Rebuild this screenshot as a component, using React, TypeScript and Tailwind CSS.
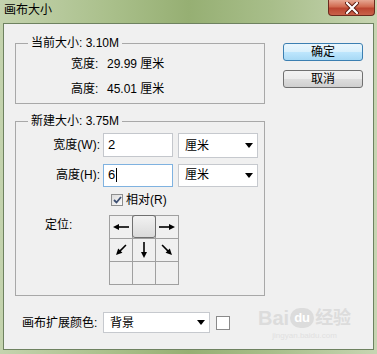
import React from 'react';

const Arrow = ({ angle, len = 14 }: { angle: number; len?: number }) => (
  <svg width="22" height="22" viewBox="0 0 22 22">
    <g transform={`rotate(${angle} 11 11)`}>
      <line x1={11 + len / 2} y1="11" x2={11 - len / 2 + 4} y2="11" stroke="#000" strokeWidth="1.6" />
      <polygon points={`${11 - len / 2},11 ${11 - len / 2 + 6},8 ${11 - len / 2 + 6},14`} fill="#000" />
    </g>
  </svg>
);

const Select = ({ value, w }: { value: string; w: string }) => (
  <div className={`${w} h-full bg-white border border-[#c6c9ce] flex items-center justify-between pl-[6px] pr-[4px]`}>
    <span className="text-[12px]">{value}</span>
    <svg width="8" height="5" viewBox="0 0 8 5">
      <polygon points="0,0 8,0 4,5" fill="#000" />
    </svg>
  </div>
);

const GroupBox = ({ title, className, children }: { title: string; className: string; children: React.ReactNode }) => (
  <div className={`relative w-[250px] border border-[#a8a8a8] ${className}`}>
    <span className="absolute -top-[8px] left-[12px] bg-[#f0f0f0] px-[3px] leading-[14px]">{title}</span>
    {children}
  </div>
);

export default function App() {
  return (
    <div className="w-[377px] h-[354px] relative overflow-hidden flex flex-col bg-[linear-gradient(90deg,#c4d3ae_0%,#a9bf8a_30%,#96af73_50%,#a8be8a_72%,#c7d5b2_100%)] font-['Liberation_Sans','Noto_Sans_CJK_SC',sans-serif] text-[12px] text-black">
      {/* title bar */}
      <div className="h-[23px] flex items-start justify-between shrink-0">
        <span className="ml-[4px] mt-[2px] leading-[16px] text-[12px]">画布大小</span>
        <div className="mr-[2px] w-[47px] h-[16px] rounded-b-[4px] border border-t-0 border-[#6b2a1e] bg-[linear-gradient(180deg,#e6a792_0%,#d16a50_45%,#bb4530_55%,#c9614a_100%)] flex items-center justify-center">
          <svg width="14" height="12" viewBox="0 0 14 12">
            <path d="M2 1 L12 11 M12 1 L2 11" stroke="#5a1a10" strokeWidth="4" strokeLinecap="round" />
            <path d="M2 1 L12 11 M12 1 L2 11" stroke="#fff" strokeWidth="2.2" strokeLinecap="round" />
          </svg>
        </div>
      </div>

      {/* dialog body */}
      <div className="mx-[3px] h-[327px] bg-[#f0f0f0] border border-[#6e8260] flex relative">
        <div className="w-[279px] pl-[11px] pt-[19px] flex flex-col">
          <GroupBox title="当前大小: 3.10M" className="h-[61px]">
            <div className="pt-[12px] pl-[55px] flex flex-col gap-[9px]">
              <div className="flex h-[16px] items-center">
                <span className="w-[36px]">宽度:</span>
                <span>29.99 厘米</span>
              </div>
              <div className="flex h-[16px] items-center">
                <span className="w-[36px]">高度:</span>
                <span>45.01 厘米</span>
              </div>
            </div>
          </GroupBox>

          <GroupBox title="新建大小: 3.75M" className="h-[175px] mt-[17px]">
            <div className="pt-[11px] flex flex-col">
              <div className="flex h-[24px] items-center">
                <span className="w-[84px] text-right">宽度(W):</span>
                <div className="ml-[3px] w-[70px] h-[24px] bg-white border border-[#c4c7cc] flex items-center pl-[4px] text-[13px]">2</div>
                <div className="ml-[5px] h-[25px] self-start">
                  <Select value="厘米" w="w-[80px]" />
                </div>
              </div>
              <div className="flex h-[24px] items-center mt-[6px]">
                <span className="w-[84px] text-right">高度(H):</span>
                <div className="ml-[3px] w-[70px] h-[23px] bg-white border border-[#7fb2e0] flex items-center pl-[4px] text-[13px]">
                  6<span className="w-px h-[14px] bg-black ml-px" />
                </div>
                <div className="ml-[5px] h-[23px]">
                  <Select value="厘米" w="w-[80px]" />
                </div>
              </div>
              <div className="flex h-[13px] items-center mt-[6px] pl-[95px]">
                <div className="w-[12px] h-[12px] border border-[#8e8f8f] bg-[linear-gradient(135deg,#dcdcdc,#fbfbfb)] flex items-center justify-center">
                  <svg width="9" height="8" viewBox="0 0 9 8">
                    <path d="M1 4 L3.5 6.5 L8 1" stroke="#3d4f72" strokeWidth="1.8" fill="none" />
                  </svg>
                </div>
                <span className="ml-[3px] leading-[14px]">相对(R)</span>
              </div>
              <div className="flex mt-[9px]">
                <span className="w-[93px] pl-[29px] mt-[2px] leading-[16px]">定位:</span>
                <div className="grid grid-cols-3 w-[70px] border-l border-t border-[#a0a0a0]">
                  <div className="w-[23px] h-[23px] border-r border-b border-[#a0a0a0] flex items-center justify-center">
                    <Arrow angle={0} len={16} />
                  </div>
                  <div className="w-[23px] h-[23px] border-r border-b border-[#a0a0a0] relative">
                    <div className="absolute -left-[1px] -top-[1px] w-[24px] h-[23px] rounded-[3px] border border-[#707070] bg-[linear-gradient(180deg,#f2f2f2,#dadada)]" />
                  </div>
                  <div className="w-[23px] h-[23px] border-r border-b border-[#a0a0a0] flex items-center justify-center">
                    <Arrow angle={180} len={16} />
                  </div>
                  <div className="w-[23px] h-[23px] border-r border-b border-[#a0a0a0] flex items-center justify-center">
                    <Arrow angle={-45} len={14} />
                  </div>
                  <div className="w-[23px] h-[23px] border-r border-b border-[#a0a0a0] flex items-center justify-center">
                    <Arrow angle={-90} len={16} />
                  </div>
                  <div className="w-[23px] h-[23px] border-r border-b border-[#a0a0a0] flex items-center justify-center">
                    <Arrow angle={-135} len={14} />
                  </div>
                  <div className="w-[23px] h-[23px] border-r border-b border-[#a0a0a0]" />
                  <div className="w-[23px] h-[23px] border-r border-b border-[#a0a0a0]" />
                  <div className="w-[23px] h-[23px] border-r border-b border-[#a0a0a0]" />
                </div>
              </div>
            </div>
          </GroupBox>

          <div className="flex items-center h-[21px] mt-[16px] pl-[7px]">
            <span className="w-[81px]">画布扩展颜色:</span>
            <Select value="背景" w="w-[107px]" />
            <div className="ml-[6px] w-[14px] h-[14px] bg-white border border-[#8a8a8a]" />
          </div>
        </div>

        <div className="pt-[19px] flex flex-col">
          <button className="w-[80px] h-[18px] rounded-[3px] border border-[#3c7fb1] bg-[linear-gradient(180deg,#eaf6fd_0%,#d9f0fc_50%,#bee6fd_51%,#a7d9f5_100%)] text-[12px] leading-[16px]">
            确定
          </button>
          <button className="w-[80px] h-[18px] mt-[9px] rounded-[3px] border border-[#707070] bg-[linear-gradient(180deg,#f2f2f2_0%,#ebebeb_50%,#dddddd_51%,#cfcfcf_100%)] text-[12px] leading-[16px]">
            取消
          </button>
        </div>

        {/* watermark */}
        <div className="absolute left-[254px] top-[283px] flex flex-col items-center pointer-events-none select-none">
          <div className="flex items-center text-[20px] font-bold text-[#dcdcdc] leading-[22px]">
            <span>Bai</span>
            <span className="mx-[1px] w-[24px] h-[20px] rounded-full bg-[#dcdcdc] text-white text-[13px] flex items-center justify-center">du</span>
            <span className="text-[18px]">经验</span>
          </div>
          <span className="text-[8px] text-[#e0e0e0] leading-[10px] mt-[2px]">jingyan.baidu.com</span>
        </div>
      </div>
    </div>
  );
}
